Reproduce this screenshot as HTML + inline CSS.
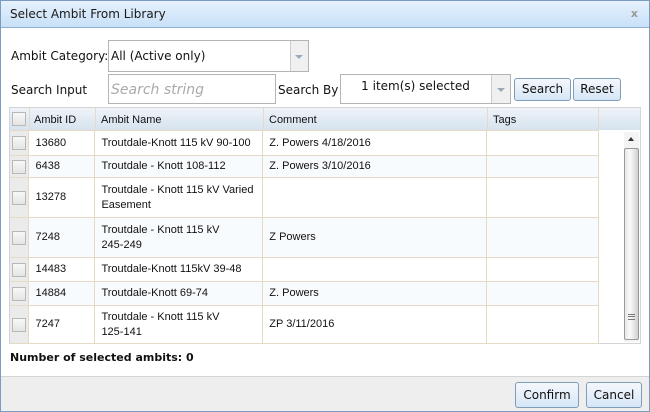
<!DOCTYPE html>
<html><head><meta charset="utf-8"><style>
*{box-sizing:border-box;margin:0;padding:0}
body{width:650px;height:412px;overflow:hidden;background:#fff;font-family:"DejaVu Sans","Liberation Sans",sans-serif;font-size:11px;color:#111;position:relative}
.a{position:absolute}
#frame{left:0;top:0;width:650px;height:412px;border:1px solid #7a9cc0}
#title{left:1px;top:1px;width:648px;height:27px;background:linear-gradient(#e6f1fc,#c8e0f8);border-bottom:1px solid #8fb0d0;font-size:12px;line-height:27px;padding-left:9px;color:#1a1a1a}
.x{right:12px;top:7px;color:#999;font-size:11px;font-weight:bold}
.inp{border:1px solid #b4b4b4;background:#fff}
.btn{border:1px solid #7f9db9;border-radius:3px;background:linear-gradient(#f4f8fc,#d6e6f6);text-align:center;font-size:12px;color:#111}
.dd{border-left:1px solid #ccc;background:#f0f0f0}
.tri{width:0;height:0;border-left:4px solid transparent;border-right:4px solid transparent;border-top:4px solid #9ab;}
table{border-collapse:collapse;font-family:"Liberation Sans",Arial,sans-serif;font-size:11px}
td{border:1px solid #e6dac6;padding:0 0 0 6px;vertical-align:middle;line-height:15px}
.cb{width:14px;height:14px;border:1px solid #b8b8b8;background:linear-gradient(#f8f8f8,#e4e4e4);display:block;margin:0 auto}
td.c{background:#ebebeb;padding:0;border-left:none}
tr.alt td{background:#f8fbfe}
tr.alt td.c{background:#ebebeb}
</style></head><body>
<div class="a" id="frame"></div>
<div class="a" id="title">Select Ambit From Library</div>
<div class="a x">x</div>

<div class="a" style="left:11px;top:49px;font-size:12px">Ambit Category:</div>
<div class="a inp" style="left:108px;top:40px;width:201px;height:32px"></div>
<div class="a" style="left:111px;top:49px;font-size:12px">All (Active only)</div>
<div class="a dd" style="left:290px;top:41px;width:18px;height:30px"></div>
<div class="a tri" style="left:295px;top:55px"></div>

<div class="a" style="left:11px;top:83px;font-size:12px">Search Input</div>
<div class="a inp" style="left:108px;top:74px;width:168px;height:30px"></div>
<div class="a" style="left:111px;top:82px;font-size:14px;color:#aaa;font-style:italic">Search string</div>
<div class="a" style="left:278px;top:83px;font-size:12px">Search By</div>
<div class="a inp" style="left:340px;top:74px;width:171px;height:30px"></div>
<div class="a" style="left:340px;top:79px;width:151px;text-align:center;font-size:12px">1 item(s) selected</div>
<div class="a dd" style="left:491px;top:75px;width:19px;height:28px"></div>
<div class="a tri" style="left:497px;top:88px"></div>
<div class="a btn" style="left:514px;top:78px;width:57px;height:23px;line-height:21px">Search</div>
<div class="a btn" style="left:573px;top:78px;width:48px;height:23px;line-height:21px">Reset</div>

<div class="a" style="left:9px;top:107px;width:632px;height:237px;border:1px solid #d4d4d4"></div>
<div class="a" style="left:10px;top:108px;width:630px;height:22px;background:linear-gradient(#eef3f8,#d6e3ef)"></div>
<div class="a" style="left:10px;top:109px;width:630px;height:22px;font-family:'Liberation Sans',sans-serif;font-size:11px;line-height:22px">
<span class="a cb" style="left:2px;top:3px"></span>
<span class="a" style="left:19px;top:-1px;width:1px;height:22px;background:#e6dac6"></span>
<span class="a" style="left:24px">Ambit ID</span>
<span class="a" style="left:85px;top:-1px;width:1px;height:22px;background:#e6dac6"></span>
<span class="a" style="left:91px">Ambit Name</span>
<span class="a" style="left:253px;top:-1px;width:1px;height:22px;background:#e6dac6"></span>
<span class="a" style="left:259px">Comment</span>
<span class="a" style="left:477px;top:-1px;width:1px;height:22px;background:#e6dac6"></span>
<span class="a" style="left:483px">Tags</span>
<span class="a" style="left:588px;top:-1px;width:1px;height:22px;background:#e6dac6"></span>
</div>

<table class="a" style="left:10px;top:130px;width:589px">
<colgroup><col style="width:19px"><col style="width:66px"><col style="width:168px"><col style="width:224px"><col style="width:112px"></colgroup>
<tr style="height:25px"><td class="c"><span class="cb"></span></td><td>13680</td><td>Troutdale-Knott 115 kV 90-100</td><td>Z. Powers 4/18/2016</td><td></td></tr>
<tr class="alt" style="height:22px"><td class="c"><span class="cb"></span></td><td>6438</td><td>Troutdale - Knott 108-112</td><td>Z. Powers 3/10/2016</td><td></td></tr>
<tr style="height:40px"><td class="c"><span class="cb"></span></td><td>13278</td><td>Troutdale - Knott 115 kV Varied Easement</td><td></td><td></td></tr>
<tr class="alt" style="height:40px"><td class="c"><span class="cb"></span></td><td>7248</td><td>Troutdale - Knott 115 kV<br>245-249</td><td>Z Powers</td><td></td></tr>
<tr style="height:24px"><td class="c"><span class="cb"></span></td><td>14483</td><td>Troutdale-Knott 115kV 39-48</td><td></td><td></td></tr>
<tr class="alt" style="height:24px"><td class="c"><span class="cb"></span></td><td>14884</td><td>Troutdale-Knott 69-74</td><td>Z. Powers</td><td></td></tr>
<tr style="height:38px"><td class="c"><span class="cb"></span></td><td>7247</td><td>Troutdale - Knott 115 kV<br>125-141</td><td>ZP 3/11/2016</td><td></td></tr>
</table>

<div class="a" style="left:624px;top:132px;width:15px;height:210px;background:#f4f4f4"></div>
<div class="a" style="left:628px;top:137px;width:0;height:0;border-left:3px solid transparent;border-right:3px solid transparent;border-bottom:4px solid #333"></div>
<div class="a" style="left:624px;top:148px;width:15px;height:192px;border:1px solid #999;border-radius:2px;background:linear-gradient(90deg,#e8e8e8,#fafafa 40%,#d0d0d0)"></div>
<div class="a" style="left:628px;top:314px;width:7px;height:6px;border-top:1px solid #777;border-bottom:1px solid #777"></div>
<div class="a" style="left:628px;top:316px;width:7px;height:1px;background:#777"></div>

<div class="a" style="left:10px;top:351px;font-size:11px;font-weight:bold">Number of selected ambits: 0</div>

<div class="a" style="left:1px;top:376px;width:648px;height:35px;background:#eeeeee;border-top:1px solid #d4d4d4"></div>
<div class="a btn" style="left:515px;top:382px;width:64px;height:26px;line-height:24px">Confirm</div>
<div class="a btn" style="left:586px;top:382px;width:56px;height:26px;line-height:24px">Cancel</div>
</body></html>
